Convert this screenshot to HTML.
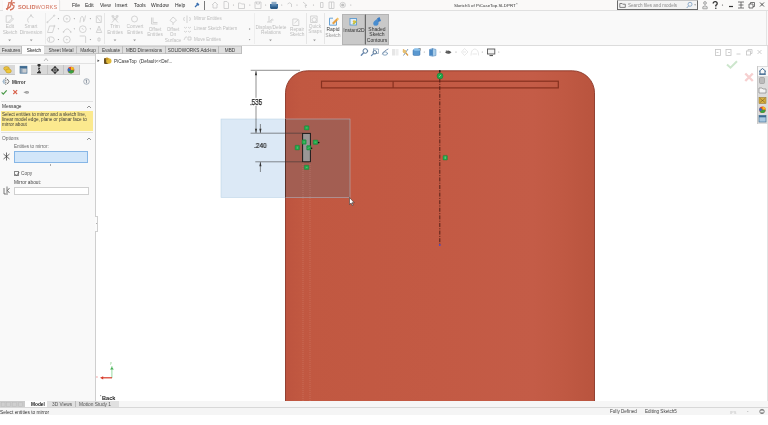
<!DOCTYPE html>
<html><head><meta charset="utf-8">
<style>
*{margin:0;padding:0;box-sizing:border-box}
html,body{width:768px;height:425px;overflow:hidden;background:#fff;font-family:"Liberation Sans",sans-serif;position:relative;-webkit-font-smoothing:antialiased}
.a{position:absolute}
.t{position:absolute;white-space:nowrap;will-change:transform;font-size:5px;line-height:6px;color:#333}
.tb{font-size:4.6px}
.g{color:#bdbdbd}
.c{text-align:center;transform:translateX(-50%)}
</style></head><body>
<!-- title bar -->
<div class="a" style="left:0;top:0;width:768px;height:10px;background:#faf9f8"></div>
<div class="a" style="left:0;top:10px;width:768px;height:1px;background:#e0e0e0"></div>
<div class="a" style="left:3px;top:0;width:57px;height:12px;background:#fdfbfb;border-right:1px solid #e6e6e6;box-shadow:0 1px 1px #e8e8e8"></div>
<svg class="a" style="left:4px;top:0" width="13" height="11" viewBox="0 0 13 11">
<path d="M3 10 L5 3 M8 0 L7 3 M4 3 Q7 2 7 4 Q7 8 2 9 M11 3 Q8 2 8 4 Q9 6 10 6 Q10 9 6 10" stroke="#d4735d" stroke-width="1.3" fill="none"/>
</svg>
<div class="t" style="left:18px;top:3.6px;font-size:5.6px;line-height:7px;font-weight:bold;color:#d47560;letter-spacing:0.1px">SOLID<span style="font-weight:normal">WORKS</span></div>
<div class="t" style="left:72px;top:2.4px;color:#2a2a2a">File</div>
<div class="t" style="left:85px;top:2.4px;color:#2a2a2a">Edit</div>
<div class="t" style="left:100px;top:2.4px;color:#2a2a2a">View</div>
<div class="t" style="left:115px;top:2.4px;color:#2a2a2a">Insert</div>
<div class="t" style="left:134px;top:2.4px;color:#2a2a2a">Tools</div>
<div class="t" style="left:151px;top:2.4px;color:#2a2a2a">Window</div>
<div class="t" style="left:175px;top:2.4px;color:#2a2a2a">Help</div>
<svg class="a" style="left:194px;top:2px" width="6" height="6" viewBox="0 0 6 6"><path d="M1 5 L3 3 M2.5 1.5 L4.5 3.5 M3 1 L5 3" stroke="#3a6fb0" stroke-width="1.2"/></svg>
<div class="a" style="left:204px;top:0.5px;width:1px;height:9px;background:#7a7a7a"></div>
<div class="t" style="left:453.6px;top:2.5px;color:#333;font-size:4.4px">Sketch5 of PiCaseTop.SLDPRT</div>
<div class="a" style="left:617px;top:0;width:81px;height:10px;background:#f3f3f3;border:1px solid #6a6a6a;border-top:1px solid #c4c4c4"></div>
<div class="t g" style="left:627.8px;top:2.6px;color:#8a8a8a;font-size:4.6px">Search files and models</div>

<!-- ribbon -->
<div class="a" style="left:0;top:11px;width:768px;height:34px;background:#f9f9f9"></div>
<div class="a" style="left:0;top:45px;width:768px;height:1px;background:#dcdcdc"></div>
<div class="a" style="left:44.8px;top:13px;width:1px;height:31px;background:#ececec"></div>
<div class="a" style="left:104px;top:13px;width:1px;height:31px;background:#e6e6e6"></div>
<div class="a" style="left:254px;top:13px;width:1px;height:31px;background:#eeeeee"></div>
<div class="a" style="left:306px;top:13px;width:1px;height:31px;background:#e6e6e6"></div>
<div class="a" style="left:324px;top:13px;width:1px;height:31px;background:#e6e6e6"></div>
<svg class="a" style="left:0;top:11px" width="400" height="34" viewBox="0 11 400 34" fill="none" stroke="#cdcdcd" stroke-width="0.85">
<!-- edit sketch -->
<path d="M6.2 15.8 h5.5 v2.5 M6.2 15.8 v6.5 h2.5 M8.5 22 l4 -4 l1 1 l-4 4z"/>
<!-- smart dim -->
<path d="M28.5 22.5 q-1.5 -2 -0.5 -4 l3 -3 l2.5 2.5 M30 16.5 l1 -2 l1 2"/>
<!-- small grid -->
<path d="M47.4 22.2 L54.2 15.6"/><circle cx="47.4" cy="22.2" r="0.6"/><circle cx="54.2" cy="15.6" r="0.6"/>
<circle cx="66.8" cy="18.8" r="3.4"/><circle cx="66.8" cy="18.8" r="0.6"/>
<path d="M80 22.5 q0.5 -7 2.5 -6 q1.5 1 1 5 q0.8 1 2 -6"/>
<path d="M96.3 16 h5 v6.5 h-5z M97 17 l3.5 4.5"/>
<path d="M47.5 32.5 l2 -6.5 h5 l-2 6.5z"/><circle cx="54.5" cy="26" r="0.6"/>
<path d="M63.5 32 q3.7 -6.5 7.3 0"/><circle cx="63.5" cy="32" r="0.5"/><circle cx="70.8" cy="32" r="0.5"/>
<circle cx="82.8" cy="29.2" r="3.4"/><path d="M81.8 28 l1.6 1.8"/>
<path d="M96.3 32.5 l2.7 -6.5 l2.7 6.5z M98 30 h2"/>
<ellipse cx="50.8" cy="39.6" rx="3.5" ry="2.8"/><path d="M49.5 37.5 v4"/>
<circle cx="66.8" cy="39.6" r="3.4"/><circle cx="66.8" cy="39.6" r="0.5"/>
<path d="M79.6 36 h5 q1 0 1 1 v6"/>
<path d="M98 38 h2 v3 h-2z"/>
<!-- trim -->
<path d="M112 15.5 l6 7 M118 15.5 l-6 7 M112.5 19 h5"/><circle cx="113" cy="16.5" r="1"/><circle cx="117" cy="16.5" r="1"/>
<circle cx="134.5" cy="19" r="3"/>
<path d="M151.5 17.5 v6.5 h6 M153 17.5 v5 h4.5"/>
<path d="M170 20.5 l3 -3.5 l3.5 3 l-3 3z M173 23 v2"/>
<path d="M184.5 17 l-1 2 l1 2 M189.5 17 l1 2 l-1 2 M187 15.5 v7.5"/>
<path d="M184 27 l1.5 1.2 l1.5 -1.2 M188 27 l1.5 1.2 l1.5 -1.2 M184 31 l1.5 1.2 l1.5 -1.2 M188 31 l1.5 1.2 l1.5 -1.2"/>
<path d="M184 40 l1.5 -3 h1.5 M188 37 h3 v3 h-3z"/>
<!-- display/delete -->
<path d="M269 16 v6 M267 22 h5 M270 21 l2.5 -2 M271 20 h2.5"/>
<path d="M292.8 19 h4.5 l1.5 1.5 v5 h-6z M294.5 23 l4 -3.5"/>
<path d="M310.6 16 h6.5 v6.5 h-6.5z"/><circle cx="314.2" cy="19.8" r="2.2"/>
</svg>
<svg class="a" style="left:0;top:11px" width="400" height="34" viewBox="0 11 400 34" fill="#9a9a9a">
<path d="M8.2 39.6 h2.8 l-1.4 1.7z M29.8 39.6 h2.8 l-1.4 1.7z M113.6 39.6 h2.8 l-1.4 1.7z M133.2 39.6 h2.8 l-1.4 1.7z M269.1 39.6 h2.8 l-1.4 1.7z M313.1 39.6 h2.8 l-1.4 1.7z"/>
<path d="M57.6 18.3 h1.6 l-0.8 1.1z M73.6 18.3 h1.6 l-0.8 1.1z M89.6 18.3 h1.6 l-0.8 1.1z M57.6 28.5 h1.6 l-0.8 1.1z M73.6 28.5 h1.6 l-0.8 1.1z M89.6 28.5 h1.6 l-0.8 1.1z M57.6 39.1 h1.6 l-0.8 1.1z M89.6 39.1 h1.6 l-0.8 1.1z"/>
<circle cx="249.6" cy="29" r="0.7"/><circle cx="249.6" cy="39.6" r="0.7"/>
</svg>
<div class="t g c" style="left:9.6px;top:23.7px;line-height:5.6px;font-size:4.8px">Edit<br>Sketch</div>
<div class="t g c" style="left:31.2px;top:23.7px;line-height:5.6px;font-size:4.8px">Smart<br>Dimension</div>
<div class="t g c" style="left:115px;top:23.9px;line-height:5.6px;font-size:4.8px">Trim<br>Entities</div>
<div class="t g c" style="left:134.6px;top:23.9px;line-height:5.6px;font-size:4.8px">Convert<br>Entities</div>
<div class="t g c" style="left:154.6px;top:27.1px;line-height:5.4px;font-size:4.8px">Offset<br>Entities</div>
<div class="t g c" style="left:172.9px;top:27.1px;line-height:5.3px;font-size:4.8px">Offset<br>On<br>Surface</div>
<div class="t g" style="left:194.4px;top:16.4px;font-size:4.5px">Mirror Entities</div>
<div class="t g" style="left:194.4px;top:26.4px;font-size:4.5px">Linear Sketch Pattern</div>
<div class="t g" style="left:194.4px;top:36.9px;font-size:4.5px">Move Entities</div>
<div class="t g c" style="left:270.5px;top:24.6px;line-height:5.3px;font-size:4.8px">Display/Delete<br>Relations</div>
<div class="t g c" style="left:296.5px;top:27.4px;line-height:5.3px;font-size:4.8px">Repair<br>Sketch</div>
<div class="t g c" style="left:314.5px;top:24.3px;line-height:5.4px;font-size:4.8px">Quick<br>Snaps</div>
<!-- rapid / instant / shaded -->
<div class="a" style="left:342px;top:14px;width:23px;height:31px;background:#c9c9c9;border:1px solid #b4b4b4"></div>
<div class="a" style="left:365px;top:14px;width:24px;height:31px;background:#c9c9c9;border:1px solid #b4b4b4;border-left:1px solid #6a6a6a"></div>
<svg class="a" style="left:326px;top:14px" width="64" height="15" viewBox="326 14 64 15">
<path d="M336.5 21 v4.2 h-7 v-7 h3.5" fill="#eef4fa" stroke="#5a9ad0" stroke-width="0.9"/>
<path d="M332 23 l4.5 -4.5 l1.5 1.5 l-4.5 4.5z" fill="#e8a040"/><path d="M336.5 18.5 l1 -1 l1.5 1.5 l-1 1z" fill="#f0c060"/>
<rect x="350" y="18.5" width="6.5" height="6.5" fill="#e4eef8" stroke="#5a9ad0" stroke-width="0.9"/>
<path d="M352.5 23.5 l3 -3 l1.3 1.3 l-3 3z" fill="#b8c040"/><circle cx="354" cy="21.5" r="1.2" fill="#e0c040"/>
<path d="M374 25.5 q-1.8 -2.5 0.5 -4.5 l2.5 -2 l1.5 3 q0.5 3 -2 3.8z" fill="#4a8ed0"/>
<path d="M377 18.5 l2.5 -1.5 l1.5 4 l-3 1z" fill="#3a7cc4"/>
</svg>
<div class="t c" style="left:333px;top:27.2px;line-height:5.6px;color:#444">Rapid<br><span style="color:#999">Sketch</span></div>
<div class="t c" style="left:353.5px;top:26.6px;color:#333">Instant2D</div>
<div class="t c" style="left:377px;top:26.8px;line-height:5.4px;color:#333">Shaded<br>Sketch<br>Contours</div>

<!-- quick access -->
<svg class="a" style="left:205px;top:0" width="150" height="10" viewBox="205 0 150 10">
<g fill="none" stroke="#c8c8c8" stroke-width="0.8">
<path d="M212 5 l3 -3 l3 3 M213 4.5 v3.5 h4 v-3.5"/>
<path d="M224 1.5 h3 l1.5 1.5 v5.5 h-4.5z"/>
<path d="M238.5 3 h2 l1 1 h3 v4.5 h-6z"/>
<path d="M255 2 h6 v6.5 h-6z M256.5 2 v2 h3 v-2"/>
<path d="M287.5 4 q2 -2.5 4 0 v3"/>
<path d="M303 2 l4 3.5 h-2 l1 2.5"/>
<path d="M320.5 2.5 h2.5 v5 h-2.5z"/>
<path d="M329 2 h5 v6.5 h-5z M331.5 2 v6.5"/>
<circle cx="342.7" cy="5" r="2.7"/>
</g>
<path d="M270 4 h8 v4 h-8z" fill="#3a6d9c"/><path d="M271.5 1.8 h5 v2.5 h-5z" fill="#8aa8c4"/><path d="M270.5 7 h7 v2 h-7z" fill="#2c5a86"/><path d="M271.5 5 h5" stroke="#9ab8d8" stroke-width="0.5"/>
<circle cx="342.7" cy="5" r="1.6" fill="#c0c0c0"/>
<g fill="#b0b0b0"><circle cx="233.5" cy="5" r="0.6"/><circle cx="249.8" cy="5" r="0.6"/><circle cx="265.6" cy="5" r="0.6"/><circle cx="281.7" cy="5" r="0.6"/><circle cx="297" cy="5" r="0.6"/><circle cx="313.5" cy="5" r="0.6"/><circle cx="350.8" cy="5" r="0.6"/></g>
</svg>
<div class="t" style="left:515.5px;top:2.3px;color:#555;font-size:4.4px">*</div>
<!-- right title icons -->
<svg class="a" style="left:700px;top:0" width="68" height="10" viewBox="700 0 68 10">
<g fill="none" stroke="#999" stroke-width="0.8">
<circle cx="705" cy="3" r="1.4" fill="#ddd"/><path d="M702.8 8.8 v-2 q2.2 -2.2 4.4 0 v2z" fill="#ddd"/>
<path d="M692 3.5 a2 2 0 1 1 2.5 2 l-1 1.5" stroke="#888"/>
</g>
<path d="M713.2 3.6 q0 -2 2 -2 q2 0 2 2 q0 1.2 -1.4 1.8 v1.1" fill="none" stroke="#333" stroke-width="1.3"/><circle cx="715.8" cy="8.2" r="0.8" fill="#333"/>
<circle cx="722.5" cy="5" r="0.6" fill="#555"/>
<path d="M729 6.5 h4" stroke="#333" stroke-width="1.2"/>
<path d="M738 2 h6 M738 8 h6 M738.5 5 h5 M741 2 v6" stroke="#555" stroke-width="0.8"/>
<path d="M749 4 h4 v4 h-4z M750.5 4 v-1.5 h4 v4 h-1.5" fill="none" stroke="#555" stroke-width="0.8"/>
<path d="M760 2.5 l4 4 M764 2.5 l-4 4" stroke="#444" stroke-width="0.9"/>
</svg>
<svg class="a" style="left:619px;top:0" width="80" height="10" viewBox="619 0 80 10">
<path d="M619.8 3.5 h2.3 l0.6 0.7 h2.6 v3.2 h-5.5z" fill="none" stroke="#666" stroke-width="0.8"/>
<circle cx="690" cy="4.3" r="2" fill="none" stroke="#7a9cc0" stroke-width="0.8"/><path d="M688.5 6 l-1.8 2" stroke="#7a9cc0" stroke-width="0.9"/>
<path d="M694.3 4.5 h1.6 l-0.8 1z" fill="#444"/>
</svg>

<!-- command manager tabs -->
<div class="a" style="left:0;top:45.8px;width:242px;height:8.5px;background:#dfdfdf;border-top:0.6px solid #cfcfcf;border-bottom:1px solid #c4c4c4"></div>
<div class="a" style="left:22px;top:45.5px;width:22.3px;height:9.5px;background:#fdfdfd"></div>
<div class="a" style="left:21px;top:46px;width:1px;height:8px;background:#bdbdbd"></div>
<div class="a" style="left:76px;top:46px;width:1px;height:8px;background:#bdbdbd"></div>
<div class="a" style="left:98px;top:46px;width:1px;height:8px;background:#bdbdbd"></div>
<div class="a" style="left:122px;top:46px;width:1px;height:8px;background:#bdbdbd"></div>
<div class="a" style="left:165px;top:46px;width:1px;height:8px;background:#bdbdbd"></div>
<div class="a" style="left:218px;top:46px;width:1px;height:8px;background:#bdbdbd"></div>
<div class="a" style="left:241px;top:46px;width:1px;height:8px;background:#bdbdbd"></div>
<div class="t c" style="left:11px;top:48.3px;color:#3a3a3a;font-size:4.7px">Features</div>
<div class="t c" style="left:33.5px;top:48.3px;color:#222;font-size:4.7px">Sketch</div>
<div class="t c" style="left:60.5px;top:48.3px;color:#3a3a3a;font-size:4.7px">Sheet Metal</div>
<div class="t c" style="left:87.5px;top:48.3px;color:#3a3a3a;font-size:4.7px">Markup</div>
<div class="t c" style="left:110.5px;top:48.3px;color:#3a3a3a;font-size:4.7px">Evaluate</div>
<div class="t c" style="left:143.5px;top:48.3px;color:#3a3a3a;font-size:4.7px">MBD Dimensions</div>
<div class="t c" style="left:191.5px;top:48.3px;color:#3a3a3a;font-size:4.7px">SOLIDWORKS Add-ins</div>
<div class="t c" style="left:229.5px;top:48.3px;color:#3a3a3a;font-size:4.7px">MBD</div>

<!-- left panel -->
<div class="a" style="left:0;top:54px;width:95px;height:347px;background:#f9f9f9"></div>
<div class="a" style="left:0;top:54px;width:95px;height:1.5px;background:#e4e4e4"></div>
<div class="a" style="left:95px;top:54px;width:1px;height:347px;background:#cfcfcf"></div>
<div class="a" style="left:0;top:62.5px;width:95px;height:1px;background:#e2e2e2"></div>
<svg class="a" style="left:43px;top:57px" width="6" height="5"><path d="M1 4 L3 1.5 L5 4" fill="none" stroke="#aaa" stroke-width="0.8"/></svg>
<!-- panel icon tabs -->
<div class="a" style="left:0;top:64.5px;width:79px;height:10.3px;background:#d9d9d9;border-bottom:1px solid #c6c6c6"></div>
<div class="a" style="left:15.3px;top:64px;width:15.7px;height:11.5px;background:#f9f9f9"></div>
<div class="a" style="left:46.8px;top:64.5px;width:1px;height:10px;background:#c4c4c4"></div>
<div class="a" style="left:63px;top:64.5px;width:1px;height:10px;background:#c4c4c4"></div>
<div class="a" style="left:78.5px;top:64.5px;width:1px;height:10px;background:#c4c4c4"></div>
<svg class="a" style="left:0;top:64px" width="80" height="12" viewBox="0 64 80 12">
<ellipse cx="6.5" cy="68.5" rx="2.8" ry="2" fill="#e8c040" stroke="#b89020" stroke-width="0.5"/>
<ellipse cx="8.5" cy="71" rx="2.8" ry="2" fill="#f0c838" stroke="#b89020" stroke-width="0.5"/>
<rect x="20" y="66.2" width="7" height="7" fill="#8ea4b8" stroke="#3e6a90" stroke-width="0.6"/>
<rect x="20" y="66.2" width="7" height="2" fill="#3e6a90"/>
<rect x="22.5" y="69" width="4" height="3.5" fill="#c8ccd0"/>
<path d="M39 66.5 a1.3 1.3 0 1 1 0.1 0 M38 68 h2 l-1.5 2 l2 1.5 M37 73 l2 -2 l2 2z" fill="#333" stroke="#222" stroke-width="0.6"/>
<path d="M55 66 v8 M51 70 h8" stroke="#222" stroke-width="0.8"/><circle cx="55" cy="70" r="2.5" fill="none" stroke="#222" stroke-width="0.9"/>
<path d="M53 70 l-1.5 -0.8 v1.6z M57 70 l1.5 -0.8 v1.6z M55 68 l-0.8 -1.5 h1.6z M55 72 l-0.8 1.5 h1.6z" fill="#222"/>
<circle cx="71" cy="70" r="3.3" fill="#e04a2a"/>
<path d="M71 70 L71 66.7 A3.3 3.3 0 0 1 74.2 69.5z" fill="#f0c020"/>
<path d="M71 70 L74.2 70.5 A3.3 3.3 0 0 1 68 71.8z" fill="#3aa040"/>
<path d="M71 70 L68 71.8 A3.3 3.3 0 0 1 68.5 67.8z" fill="#2c70c8"/>
</svg>
<!-- mirror title -->
<svg class="a" style="left:1px;top:77px" width="12" height="9" viewBox="1 77 12 9">
<path d="M5.8 77.5 v7.5" stroke="#555" stroke-width="0.8" stroke-dasharray="1.6 0.6"/>
<path d="M4.3 79 l-1.6 2.5 l1.6 2.5z" fill="#a8c0d4" stroke="#7a98b0" stroke-width="0.4"/>
<path d="M7.3 79 l1.6 2.5 l-1.6 2.5" fill="none" stroke="#444" stroke-width="0.8"/>
</svg>
<div class="t" style="left:12.2px;top:79.5px;font-weight:bold;color:#333;font-size:4.7px">Mirror</div>
<svg class="a" style="left:83px;top:78px" width="7" height="7" viewBox="0 0 7 7"><circle cx="3.5" cy="3.5" r="2.8" fill="#f4f4f4" stroke="#7a8a9a" stroke-width="0.6"/><path d="M3.5 1.8 v3.4 M2.6 2.2 h1" stroke="#5a6a7a" stroke-width="0.6"/></svg>
<svg class="a" style="left:0;top:88px" width="32" height="8" viewBox="0 88 32 8">
<path d="M1.6 92.3 l1.7 1.8 l3.4 -3.8" fill="none" stroke="#4a9a48" stroke-width="1.2"/>
<path d="M13.3 90.2 l3.8 3.8 M17.1 90.2 l-3.8 3.8" stroke="#d8604a" stroke-width="1.1"/>
<path d="M23.8 92.3 h2 M26 91 v2.6 M26.3 91.7 h2 v1.4 h-2" stroke="#555" stroke-width="0.6" fill="none"/>
</svg>
<div class="a" style="left:1px;top:100.5px;width:92px;height:1px;background:#e2e2e2"></div>
<div class="t" style="left:2.3px;top:104.4px;color:#333;font-size:4.8px">Message</div>
<svg class="a" style="left:86px;top:104.5px" width="6" height="4"><path d="M1 3 L3 1 L5 3" fill="none" stroke="#666" stroke-width="0.7"/></svg>
<div class="a" style="left:0.5px;top:111.4px;width:92px;height:19.5px;background:#fbe98e"></div>
<div class="t" style="left:2.3px;top:112.3px;line-height:5.1px;color:#3a3a3a;font-size:4.6px">Select entities to mirror and a sketch line,<br>linear model edge, plane or planar face to<br>mirror about</div>
<div class="a" style="left:1px;top:132.3px;width:92px;height:1px;background:#e2e2e2"></div>
<div class="t" style="left:2.3px;top:136.3px;color:#666;font-size:4.8px">Options</div>
<svg class="a" style="left:86px;top:136.5px" width="6" height="4"><path d="M1 3 L3 1 L5 3" fill="none" stroke="#666" stroke-width="0.7"/></svg>
<div class="t" style="left:14px;top:143.8px;color:#666;font-size:4.6px">Entities to mirror:</div>
<div class="a" style="left:14px;top:150.6px;width:74px;height:12.7px;background:#d2e6f9;border:1px solid #86b6e6"></div>
<div class="a" style="left:49.5px;top:164px;width:1.5px;height:1.5px;background:#aaa"></div>
<svg class="a" style="left:2px;top:152px" width="10" height="9" viewBox="2 152 10 9"><path d="M6.5 152.5 v8 M3.5 154 l3 2.5 l-3 2.5 M9.5 154 l-3 2.5 l3 2.5" fill="none" stroke="#333" stroke-width="0.7"/></svg>
<div class="a" style="left:14px;top:170.5px;width:5.4px;height:5.4px;background:#fbfbfb;border:0.7px solid #888"></div>
<svg class="a" style="left:14px;top:170.5px" width="6" height="6"><path d="M1.2 3 l1.4 1.5 l2.6 -3.5" fill="none" stroke="#555" stroke-width="0.7"/></svg>
<div class="t" style="left:21px;top:171px;color:#555;font-size:4.8px">Copy</div>
<div class="t" style="left:14px;top:179.6px;color:#444;font-size:4.8px">Mirror about:</div>
<div class="a" style="left:14px;top:186.6px;width:74.5px;height:8.8px;background:#fff;border:1px solid #d0d0d0"></div>
<svg class="a" style="left:2px;top:186px" width="10" height="10" viewBox="2 186 10 10"><path d="M7 186.5 v8.5 M4 188 v6 h2 M9.5 188 l-2 2.5 l2 2.5" fill="none" stroke="#444" stroke-width="0.7"/></svg>

<!-- graphics area -->
<div class="a" style="left:96px;top:54px;width:672px;height:347px;background:#fff"></div>
<div class="a" style="left:766.5px;top:46px;width:1px;height:355px;background:#e2e2e2"></div>
<div class="a" style="left:766px;top:11px;width:1px;height:34px;background:#e4e4e4"></div>
<div class="a" style="left:95px;top:215.5px;width:3.2px;height:16px;background:#fbfbfb;border:0.6px solid #cfcfcf;border-left:none"></div>
<div class="a" style="left:95.6px;top:222.5px;width:1.6px;height:1.6px;background:#999;border-radius:50%"></div>
<!-- tree flyout -->
<svg class="a" style="left:96px;top:55px" width="80" height="12" viewBox="96 55 80 12">
<path d="M97.5 59.5 l2 1.3 l-2 1.3z" fill="#444"/>
<rect x="104" y="58" width="4.5" height="6" rx="1" fill="#6a5020"/>
<ellipse cx="108.8" cy="61" rx="2.7" ry="2.8" fill="#e0b838"/><ellipse cx="107" cy="58.8" rx="1.5" ry="1.2" fill="#c89828"/>
</svg>
<div class="t" style="left:113.5px;top:58.6px;color:#333;font-size:4.7px">PiCaseTop &nbsp;(Default&lt;&lt;Def...</div>
<!-- heads up toolbar -->
<svg class="a" style="left:355px;top:46px" width="150" height="12" viewBox="355 46 150 12">
<g fill="none" stroke-linecap="round">
<circle cx="365.3" cy="51" r="2.3" stroke="#5a7898" stroke-width="1"/>
<path d="M363.6 52.8 l-2.3 2.5" stroke="#6a8ab0" stroke-width="1.4"/>
<rect x="373.5" y="49" width="5" height="4.5" stroke="#8aa0b8" stroke-width="0.7" stroke-dasharray="1 0.5"/>
<circle cx="374.8" cy="52.3" r="1.8" stroke="#5a7898" stroke-width="0.9"/>
<path d="M373.4 53.8 l-2 1.8" stroke="#6a8ab0" stroke-width="1.2"/>
<path d="M382.5 54 q2 -4 5.5 -5" stroke="#8a9ab0" stroke-width="1"/>
<ellipse cx="385" cy="53.5" rx="2.5" ry="1.7" stroke="#7a9ab8" stroke-width="0.9"/>
</g>
<rect x="392" y="49" width="3" height="6.5" fill="#e6e6e6"/><rect x="395.5" y="49" width="3" height="6.5" fill="#eeeeee"/>
<path d="M403 49.5 l5 6" stroke="#d89a40" stroke-width="1.2"/><path d="M408 49 l-4.5 6.5" stroke="#7a98b8" stroke-width="1"/>
<circle cx="404.5" cy="51.5" r="1.8" fill="#e8c070"/>
<rect x="413" y="49.5" width="7" height="6" rx="1.2" fill="#5a98d0" stroke="#3a70a8" stroke-width="0.5"/>
<rect x="414" y="48.3" width="6" height="2.5" rx="0.8" fill="#8ac0ea"/>
<path d="M418.5 48.5 h2 v2" stroke="#555" stroke-width="0.5" fill="none"/>
<path d="M429.5 49.5 l3 -1 l3.5 1 v6 l-3.5 0.8 l-3 -0.8z" fill="#a8cce8" stroke="#4a80b8" stroke-width="0.5"/>
<path d="M432.5 48.5 v7.3" stroke="#4a80b8" stroke-width="0.8"/>
<rect x="429.5" y="49.5" width="3" height="6" fill="#4a88c4"/>
<path d="M445 52.2 q3 -3.2 6.5 0 q-3 3 -6.5 0z" fill="#555"/><path d="M446 50 l3 4" stroke="#777" stroke-width="0.6"/>
<g fill="none" stroke="#dedede" stroke-width="0.7">
<path d="M461.5 52 l3 -3.5 l3.5 3.5 l-3.5 3.5z"/><path d="M463 52 h3"/>
<path d="M471 55.5 q0 -6 3.8 -6.5 q3.8 0.5 3.8 6.5"/><path d="M472.5 54 h4.5"/>
</g>
<rect x="487.5" y="49" width="7.3" height="5" fill="#f4f4f4" stroke="#555" stroke-width="0.9"/>
<path d="M489.5 55.6 h3.5" stroke="#444" stroke-width="1"/>
<g fill="#999"><circle cx="424.3" cy="52" r="0.55"/><circle cx="440.1" cy="52" r="0.55"/><circle cx="456" cy="52" r="0.55"/><circle cx="482.3" cy="52" r="0.55"/><circle cx="498.8" cy="52" r="0.55"/></g>
</svg>
<svg class="a" style="left:710px;top:47px" width="58" height="12" viewBox="710 47 58 12">
<g fill="none" stroke="#c4c4c4" stroke-width="0.8">
<rect x="715.5" y="49.5" width="5" height="6"/><path d="M716.5 52.5 h2"/>
<rect x="726" y="49.5" width="5" height="6"/><path d="M728 52.5 h2"/>
<path d="M736.5 54 h4"/>
<rect x="746.5" y="51" width="4" height="4"/><path d="M748 51 v-1.5 h4 v4 h-1.5"/>
<path d="M757.5 50 l4 4 M761.5 50 l-4 4"/>
</g>
</svg>
<!-- confirmation corner -->
<svg class="a" style="left:720px;top:58px" width="36" height="26" viewBox="720 58 36 26">
<path d="M727 64.5 l3.5 3.2 l6.5 -6.5" fill="none" stroke="#cde6cd" stroke-width="2"/>
<path d="M745.3 73.5 l7.5 7.5 M752.8 73.5 l-7.5 7.5" stroke="#f6d0d0" stroke-width="2.4"/>
</svg>
<!-- task pane -->
<div class="a" style="left:756.5px;top:66px;width:11.5px;height:57.5px;background:#dcdcdc;border-left:1px solid #c8c8c8"></div>
<div class="a" style="left:757.5px;top:67px;width:10px;height:9px;background:#f8f8f8"></div>
<svg class="a" style="left:756px;top:66px" width="12" height="58" viewBox="756 66 12 58">
<path d="M759 71.5 l3.5 -3 l3.5 3 M760 71 v3 h5 v-3" fill="none" stroke="#2c5a86" stroke-width="0.9"/>
<path d="M759 74.3 h7" stroke="#2c5a86" stroke-width="0.8"/>
<rect x="759.5" y="77.5" width="5" height="6" rx="1" fill="#bbb" stroke="#888" stroke-width="0.5"/>
<path d="M759 88 h3 l1 1 h3 v4 h-7z" fill="#f4f4f4" stroke="#777" stroke-width="0.6"/>
<rect x="759" y="97.5" width="7" height="6" fill="#d8b040" stroke="#8a6a20" stroke-width="0.5"/>
<path d="M760 98.5 l5 4 M765 98.5 l-5 4" stroke="#6a5020" stroke-width="0.5"/>
<circle cx="762.5" cy="109.7" r="3.2" fill="#e04a2a"/>
<path d="M762.5 109.7 L762.5 106.5 A3.2 3.2 0 0 1 765.7 109.2z" fill="#f0c020"/>
<path d="M762.5 109.7 L765.7 110.2 A3.2 3.2 0 0 1 759.8 111.5z" fill="#3aa040"/>
<path d="M762.5 109.7 L759.8 111.5 A3.2 3.2 0 0 1 760 107.5z" fill="#2c70c8"/>
<rect x="759" y="115.5" width="7" height="6.5" fill="#a8c8e0" stroke="#3a6a90" stroke-width="0.6"/>
<rect x="759" y="115.5" width="7" height="1.8" fill="#3a6a90"/>
</svg>

<!-- model drawing -->
<svg class="a" style="left:96px;top:55px" width="671" height="346" viewBox="96 55 671 346">
<defs>
<linearGradient id="rg" x1="0" x2="1" y1="0" y2="0">
<stop offset="0" stop-color="#bd543f"/>
<stop offset="0.05" stop-color="#c15841"/>
<stop offset="0.5" stop-color="#c35a44"/>
<stop offset="0.8" stop-color="#c45c47"/>
<stop offset="0.9" stop-color="#c05943"/>
<stop offset="1" stop-color="#b9543e"/>
</linearGradient>
</defs>
<path d="M285.5 402 V92.8 A22 22 0 0 1 307.5 70.8 H572.5 A22 22 0 0 1 594.5 92.8 V402" fill="url(#rg)" stroke="#8a3626" stroke-width="0.9"/>
<!-- selection box -->
<rect x="221" y="119" width="64.5" height="78.6" fill="#dce9f6"/>
<rect x="285.5" y="119" width="64.5" height="78.6" fill="#a35e52"/>
<rect x="221" y="119" width="129" height="78.6" fill="none" stroke="#b0cce2" stroke-width="0.6" stroke-opacity="0.75"/>
<path d="M285.5 119 V197.6" stroke="#5a3028" stroke-width="1"/>
<!-- slot -->
<rect x="321.5" y="81.2" width="236.8" height="6.7" fill="none" stroke="#86301f" stroke-width="1.2"/>
<path d="M393.1 81.3 V87.9" stroke="#86301f" stroke-width="1.2"/>
<!-- center line -->
<path d="M439.8 71 V245" stroke="#4a1a12" stroke-width="0.9" stroke-dasharray="4 1.3 1 1.3"/>
<circle cx="439.8" cy="71" r="0.9" fill="#222"/>
<circle cx="439.8" cy="245" r="0.9" fill="#4848c8"/>
<circle cx="440" cy="76" r="3" fill="#22a84a" stroke="#137a35" stroke-width="0.5"/><path d="M439 77 l2 -2" stroke="#c8f0d0" stroke-width="0.5"/>
<rect x="443" y="155.4" width="4.4" height="4.6" rx="0.6" fill="#22a84a" stroke="#137a35" stroke-width="0.4"/><path d="M445.2 156.5 v2.4" stroke="#c8f0d0" stroke-width="0.5"/>
<!-- dims -->
<g stroke="#333" stroke-width="0.55" fill="none">
<path d="M250.7 70.3 H300"/>
<path d="M256 71 V97.8 M256 105.8 V133"/>
<path d="M250.6 133.2 H302.3"/>
<path d="M255.3 161.8 H302.3"/>
<path d="M260.4 124 V133 M260.4 162 V172"/>
</g>
<g fill="#333">
<path d="M256 71 l-1.1 4.2 h2.2z"/>
<path d="M256 133 l-1.1 -4.2 h2.2z"/>
<path d="M260.4 133 l-1.1 -4.2 h2.2z"/>
<path d="M260.4 162 l-1.1 4.2 h2.2z"/>
</g>
<!-- small rect -->
<rect x="302.6" y="133.4" width="7.8" height="28.4" fill="#9a9696" stroke="#1a1a1a" stroke-width="1"/>
<path d="M303 162 V402 M310 162 V402" stroke="#e0b0a8" stroke-width="0.5" stroke-dasharray="1 1" opacity="0.45"/>
<g fill="#22a84a" stroke="#137a35" stroke-width="0.4">
<rect x="304.4" y="125.8" width="4.6" height="4.2" rx="0.6"/>
<rect x="304.3" y="165.3" width="4.6" height="4.2" rx="0.6"/>
<rect x="295.1" y="145.3" width="4.4" height="4.6" rx="0.6"/>
<rect x="302" y="139.8" width="4.2" height="4.4" rx="0.6"/>
<rect x="306.7" y="145.6" width="4.2" height="4.4" rx="0.6"/>
<rect x="313.2" y="140" width="4.6" height="4.4" rx="0.6"/>
</g>
<g stroke="#c8f0d0" stroke-width="0.4" fill="none" opacity="0.8">
<path d="M305.8 127.9 h1.8 M305.8 167.4 h1.8 M297.3 146.6 v2.2 M304.1 141 v2.2 M307.8 148.8 l1.8 -1.8 M314.5 142.2 h2"/>
</g>
<circle cx="318.7" cy="142.6" r="0.8" fill="#111"/>
<circle cx="311.6" cy="148.2" r="0.8" fill="#111"/>
<!-- cursor -->
<path d="M349.5 197.5 v7 l1.6 -1.5 l1.2 2.6 l0.9 -0.4 l-1.2 -2.5 h2.2z" fill="#fff" stroke="#222" stroke-width="0.5"/>
<!-- triad -->
<path d="M111.9 378 V366" stroke="#6cc87a" stroke-width="0.7"/>
<path d="M110 369.5 l1.9 -2.5 l1.9 2.5z" fill="#48b058"/>
<path d="M112 377.8 H102" stroke="#d83a2a" stroke-width="1.2"/>
<path d="M100 377.8 l3.2 -1.6 v3.2z" fill="#d83a2a"/>
</svg>
<div class="t" style="left:95.5px;top:374px;color:#e88;font-size:3.5px">x</div>
<div class="t" style="left:110.3px;top:359.8px;color:#8c8;font-size:3.5px">y</div>
<div class="t" style="left:250px;top:98.1px;-webkit-text-stroke:0.25px #1a1a1a;color:#1a1a1a;font-size:8.2px;line-height:10px;transform:scaleX(0.76);transform-origin:0 0">.535</div>
<div class="t" style="left:254.2px;top:141.4px;-webkit-text-stroke:0.2px #1a1a1a;color:#1a1a1a;font-size:7.4px;line-height:9px;transform:scaleX(0.88);transform-origin:0 0">.240</div>
<div class="t" style="left:99.6px;top:394.3px;color:#222;font-size:3.5px">*</div><div class="t" style="left:101.6px;top:394.7px;color:#222;font-size:5.6px;font-weight:bold">Back</div>
<!-- bottom tabs -->
<div class="a" style="left:0;top:401px;width:768px;height:6.3px;background:#f6f6f6"></div>
<div class="a" style="left:0;top:401px;width:119px;height:6.3px;background:#e0e0e0"></div>
<div class="a" style="left:0;top:401px;width:25px;height:6.3px;background:#cbcbcb"></div>
<div class="a" style="left:25.4px;top:401px;width:21.5px;height:6.7px;background:#fefefe"></div>
<div class="a" style="left:74.6px;top:401px;width:1px;height:6.3px;background:#bcbcbc"></div>

<svg class="a" style="left:0;top:401px" width="26" height="7" viewBox="0 401 26 7">
<g fill="#cfcfcf" stroke="#b8b8b8" stroke-width="0.4"><rect x="1.2" y="402.2" width="3.8" height="4.2"/><rect x="6.7" y="402.2" width="3.8" height="4.2"/><rect x="12.6" y="402.2" width="3.8" height="4.2"/><rect x="18.8" y="402.2" width="3.8" height="4.2"/></g>
</svg>
<div class="t" style="left:30.5px;top:401.8px;color:#222;font-size:4.8px;font-weight:bold">Model</div>
<div class="t" style="left:52px;top:401.8px;color:#555;font-size:4.8px">3D Views</div>
<div class="t" style="left:79px;top:401.8px;color:#555;font-size:4.8px">Motion Study 1</div>
<div class="a" style="left:0;top:407.3px;width:768px;height:1px;background:#d8d8d8"></div>
<div class="a" style="left:0;top:408.3px;width:768px;height:7px;background:#f5f5f5"></div>
<div class="t" style="left:-0.5px;top:409.5px;color:#333;font-size:4.8px">Select entities to mirror</div>
<div class="t" style="left:610px;top:409.2px;color:#444;font-size:4.6px">Fully Defined</div>
<div class="t" style="left:645px;top:409.2px;color:#444;font-size:4.6px">Editing Sketch5</div>
<div class="t" style="left:730px;top:409.5px;color:#c4c4c4;font-size:4px">IPS</div>
<svg class="a" style="left:740px;top:408px" width="28" height="8" viewBox="740 408 28 8"><circle cx="747.8" cy="411.6" r="0.5" fill="#aaa"/>
<circle cx="762" cy="411.5" r="2.2" fill="none" stroke="#666" stroke-width="0.8"/><path d="M760.5 410.5 h3 M761 412.5 h2" stroke="#666" stroke-width="0.5"/></svg>
</body></html>
